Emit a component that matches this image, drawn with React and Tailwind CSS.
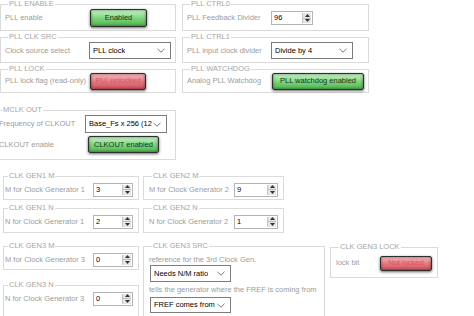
function Group({ title, className = "", children }) {
  return (
    <fieldset className={`border border-[#dadada] min-w-0 ${className}`}>
      <legend className="ml-[3px] px-[1px] text-[7.5px] leading-[8px] text-[#a6a6a6] whitespace-nowrap">
        {title}
      </legend>
      {children}
    </fieldset>
  );
}

function Chevron() {
  return (
    <svg width="8" height="5" viewBox="0 0 8 5" className="shrink-0">
      <path d="M0.5 0.8 L4 4.2 L7.5 0.8" fill="none" stroke="#6a6a6a" strokeWidth="0.9" />
    </svg>
  );
}

function Select({ value, className = "" }) {
  return (
    <div
      className={`flex items-center justify-between bg-white border border-[#7c7c7c] pl-[3px] pr-[5px] text-black text-[7.5px] whitespace-nowrap overflow-hidden ${className}`}
    >
      <span className="overflow-hidden">{value}</span>
      <Chevron />
    </div>
  );
}

function Spin({ value, className = "" }) {
  return (
    <div className={`flex items-stretch bg-white border border-[#b4b4b4] text-black text-[7.5px] ${className}`}>
      <span className="flex-1 flex items-center pl-[2px]">{value}</span>
      <div className="w-[9px] flex flex-col border-l border-[#c4c4c4] bg-[#e6e6e6] my-[1px] mr-[1px]">
        <div className="flex-1 flex items-center justify-center border-b border-[#bdbdbd]">
          <svg width="5" height="3" viewBox="0 0 5 3">
            <path d="M0 3 L2.5 0 L5 3 Z" fill="#333" />
          </svg>
        </div>
        <div className="flex-1 flex items-center justify-center">
          <svg width="5" height="3" viewBox="0 0 5 3">
            <path d="M0 0 L2.5 3 L5 0 Z" fill="#333" />
          </svg>
        </div>
      </div>
    </div>
  );
}

function Btn({ label, red = false, className = "" }) {
  const look = red
    ? "from-[#f7b8bd] via-[#e37b84] to-[#cf4f5a] text-[#d45a64]"
    : "from-[#c8f3c8] via-[#7fd57f] to-[#4fb44f] text-[#163216]";
  return (
    <div
      className={`flex items-center justify-center rounded-[2px] border border-[#2e2e2e] bg-linear-to-b ${look} shadow-[inset_0_0_3px_rgba(0,0,0,0.5),0_1px_3px_rgba(0,0,0,0.6)] text-[7.5px] whitespace-nowrap overflow-hidden ${className}`}
    >
      {label}
    </div>
  );
}

function Label({ children, className = "" }) {
  return <span className={`shrink-0 whitespace-nowrap ${className}`}>{children}</span>;
}

export default function App() {
  return (
    <div className="w-[474px] h-[316px] overflow-hidden bg-white font-['Liberation_Sans',Arial,sans-serif] text-[7.5px] text-[#9c9c9c]">
      {/* top two columns */}
      <div className="flex">
        <div className="w-[176px] flex flex-col">
          <Group title="PLL ENABLE" className="h-[31px] px-[4px]">
            <div className="h-[20px] flex items-center">
              <Label className="w-[85px]">PLL enable</Label>
              <Btn label="Enabled" className="w-[57px] h-[18px]" />
            </div>
          </Group>
          <Group title="PLL CLK SRC" className="h-[30px] px-[4px] mt-[2px]">
            <div className="h-[19px] flex items-center">
              <Label className="w-[84px]">Clock source select</Label>
              <Select value="PLL clock" className="w-[83px] h-[17px]" />
            </div>
          </Group>
          <Group title="PLL LOCK" className="h-[28px] px-[4px] mt-[2px]">
            <div className="h-[16px] flex items-center">
              <Label className="w-[85px]">PLL lock flag (read-only)</Label>
              <Btn label="PLL unlocked" red className="w-[56px] h-[17px]" />
            </div>
          </Group>
        </div>

        <div className="w-[187px] ml-[6px] flex flex-col">
          <Group title="PLL CTRL0" className="h-[31px] px-[4px]">
            <div className="h-[20px] flex items-center">
              <Label className="w-[84px]">PLL Feedback Divider</Label>
              <Spin value="96" className="w-[42px] h-[14px]" />
            </div>
          </Group>
          <Group title="PLL CTRL1" className="h-[30px] px-[4px] mt-[2px]">
            <div className="h-[19px] flex items-center">
              <Label className="w-[84px]">PLL input clock divider</Label>
              <Select value="Divide by 4" className="w-[82px] h-[17px]" />
            </div>
          </Group>
          <Group title="PLL WATCHDOG" className="h-[28px] px-[4px] mt-[2px]">
            <div className="h-[16px] flex items-center">
              <Label className="w-[85px]">Analog PLL Watchdog</Label>
              <Btn label="PLL watchdog enabled" className="w-[92px] h-[17px]" />
            </div>
          </Group>
        </div>
      </div>

      {/* MCLK OUT */}
      <Group title="MCLK OUT" className="w-[182px] h-[54px] -ml-[6px] mt-[13px] px-[4px]">
        <div className="h-[20px] flex items-center">
          <Label className="w-[86px]">Frequency of CLKOUT</Label>
          <Select value="Base_Fs x 256 (12" className="w-[82px] h-[18px]" />
        </div>
        <div className="h-[21px] flex items-center">
          <Label className="w-[89px]">CLKOUT enable</Label>
          <Btn label="CLKOUT enabled" className="w-[71px] h-[17px]" />
        </div>
      </Group>

      {/* CLK GEN1 / GEN2 */}
      <div className="flex ml-[3px] mt-[12px]">
        <div className="w-[136px] flex flex-col">
          <Group title="CLK GEN1 M" className="h-[28px] px-[1px]">
            <div className="h-[19px] flex items-center">
              <Label className="w-[88px]">M for Clock Generator 1</Label>
              <Spin value="3" className="w-[40px] h-[14px]" />
            </div>
          </Group>
          <Group title="CLK GEN1 N" className="h-[29px] px-[1px] mt-[4px]">
            <div className="h-[19px] flex items-center">
              <Label className="w-[88px]">N for Clock Generator 1</Label>
              <Spin value="2" className="w-[40px] h-[14px]" />
            </div>
          </Group>
        </div>
        <div className="w-[141px] ml-[4px] flex flex-col">
          <Group title="CLK GEN2 M" className="h-[28px] px-[5px]">
            <div className="h-[19px] flex items-center">
              <Label className="w-[85px]">M for Clock Generator 2</Label>
              <Spin value="9" className="w-[45px] h-[14px]" />
            </div>
          </Group>
          <Group title="CLK GEN2 N" className="h-[29px] px-[5px] mt-[4px]">
            <div className="h-[19px] flex items-center">
              <Label className="w-[85px]">N for Clock Generator 2</Label>
              <Spin value="1" className="w-[45px] h-[14px]" />
            </div>
          </Group>
        </div>
      </div>

      {/* CLK GEN3 */}
      <div className="flex items-start ml-[3px] mt-[9px]">
        <div className="w-[136px] flex flex-col">
          <Group title="CLK GEN3 M" className="h-[28px] px-[1px]">
            <div className="h-[19px] flex items-center">
              <Label className="w-[88px]">M for Clock Generator 3</Label>
              <Spin value="0" className="w-[40px] h-[14px]" />
            </div>
          </Group>
          <Group title="CLK GEN3 N" className="h-[40px] px-[1px] mt-[11px]">
            <div className="h-[19px] flex items-center">
              <Label className="w-[88px]">N for Clock Generator 3</Label>
              <Spin value="0" className="w-[40px] h-[14px]" />
            </div>
          </Group>
        </div>

        <Group title="CLK GEN3 SRC" className="w-[182px] h-[80px] ml-[4px] px-[5px]">
          <div className="mt-[5px] leading-[10px] whitespace-nowrap">reference for the 3rd Clock Gen.</div>
          <Select value="Needs N/M ratio" className="w-[81px] h-[17px] ml-[1px]" />
          <div className="mt-[3px] leading-[10px] whitespace-nowrap">
            tells the generator where the FREF is coming from
          </div>
          <Select value="FREF comes from" className="w-[81px] h-[16px] ml-[1px] mt-[2px]" />
        </Group>

        <Group title="CLK GEN3 LOCK" className="w-[108px] h-[35px] ml-[5px] mt-[1px] px-[5px]">
          <div className="h-[24px] flex items-center">
            <Label className="w-[44px]">lock bit</Label>
            <Btn label="Not locked" red className="w-[53px] h-[15px]" />
          </div>
        </Group>
      </div>
    </div>
  );
}
